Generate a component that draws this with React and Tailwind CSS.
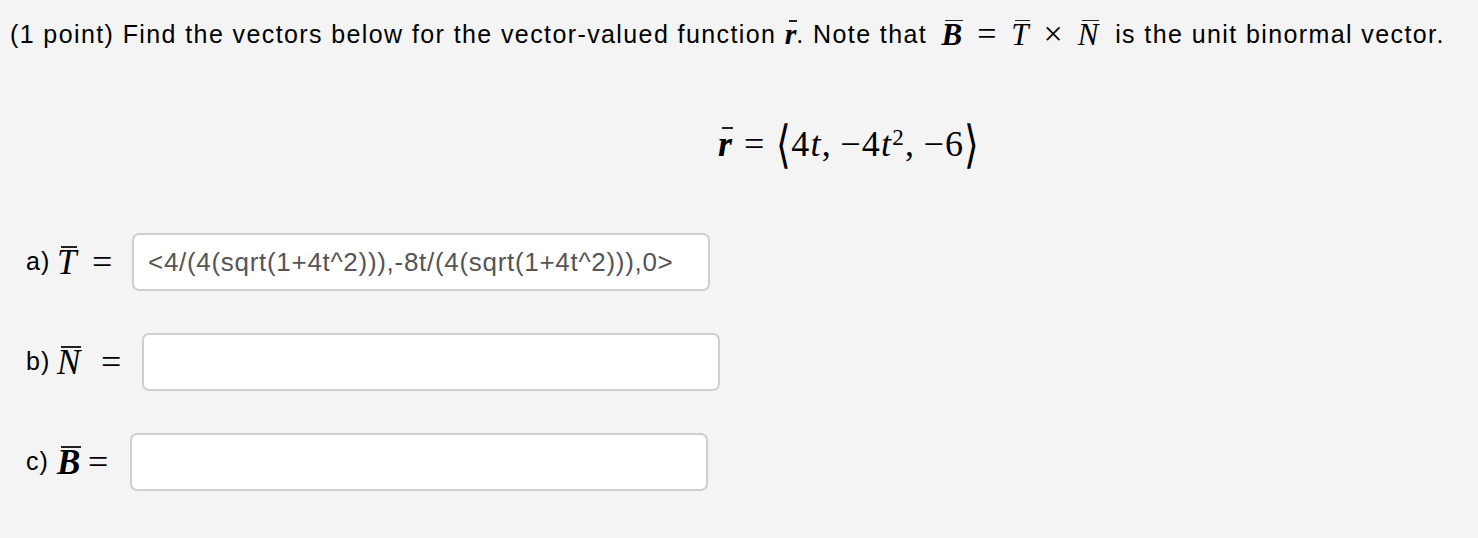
import React from "react";

const serif = { fontFamily: '"Liberation Serif", "Times New Roman", serif' };

const Vec = ({ children, bold, bar = "left-[4px] right-[-1px]", top = "top-[1px]" }) => (
  <span className="relative inline-block tracking-normal" style={serif}>
    <span className={`absolute ${bar} ${top} h-[1.5px] bg-[#222]`}></span>
    <span className={`italic ${bold ? "font-bold" : ""}`}>{children}</span>
  </span>
);

const Field = ({ label, sym, bold, value, symW, blockW }) => (
  <div className="flex items-center h-[58px]">
    <div className={`flex items-center shrink-0 pl-[26px] ${blockW}`}>
      <span className="w-[31px] text-[25px] tracking-[1px]">{label}</span>
      <span className={`text-[35px] leading-none ${symW}`}>
        <Vec bold={bold}>{sym}</Vec>
      </span>
      <span className="text-[36px] leading-none" style={serif}>=</span>
    </div>
    <div className="w-[578px] h-[58px] bg-white border-2 border-[#cfcfcf] rounded-[7px] flex items-center px-[14px] text-[26px] tracking-[0.7px] text-[#555555]">
      {value}
    </div>
  </div>
);

export default function App() {
  return (
    <div className="w-[1478px] h-[538px] bg-[#f4f4f4] text-black" style={{ fontFamily: '"Liberation Sans", Arial, sans-serif' }}>
      <div className="pt-[16px] pl-[10px] text-[25px] tracking-[1.4px] leading-[36px] flex items-center whitespace-nowrap">
        <span>(1 point) Find the vectors below for the vector-valued function&nbsp;</span>
        <span className="text-[30px] leading-none"><Vec bold>r</Vec></span>
        <span>. Note that&nbsp;</span>
        <span className="ml-[6px] text-[31px] leading-none flex items-center gap-[15px] tracking-normal" style={serif}>
          <Vec bold>B</Vec>
          <span className="text-[34px]">=</span>
          <Vec>T</Vec>
          <span className="text-[34px]">×</span>
          <Vec>N</Vec>
        </span>
        <span>&nbsp;&nbsp;is the unit binormal vector.</span>
      </div>
      <div className="flex mt-[73px] pl-[718px] text-[36px] leading-none" style={serif}>
        <span className="flex items-center">
          <Vec bold>r</Vec>
          <span className="ml-[12px]">=</span>
          <span className="ml-[12px] inline-block scale-y-[1.35] text-[38px]">⟨</span>
          <span className="tracking-[1.2px]">4<i>t</i>,&thinsp;−4<i>t</i><sup className="text-[23px]">2</sup>,&thinsp;−6</span>
          <span className="inline-block scale-y-[1.35] text-[38px]">⟩</span>
        </span>
      </div>
      <div className="mt-[70px] flex flex-col gap-[42px]">
        <Field label="a)" sym="T" symW="w-[35px]" blockW="w-[132px]" value="<4/(4(sqrt(1+4t^2))),-8t/(4(sqrt(1+4t^2))),0>" />
        <Field label="b)" sym="N" symW="w-[44px]" blockW="w-[142px]" value="" />
        <Field label="c)" sym="B" bold symW="w-[31px]" blockW="w-[130px]" value="" />
      </div>
    </div>
  );
}
